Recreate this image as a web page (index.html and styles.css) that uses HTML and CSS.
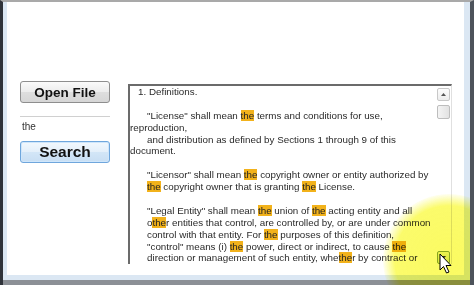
FILE: index.html
```html
<!DOCTYPE html>
<html>
<head>
<meta charset="utf-8">
<link rel="stylesheet" href="styles.css">
</head>
<body>
<div class="frame">
  <div class="chrome">
    <div class="client">
      <div class="side">
        <button class="btn open">Open File</button>
        <div class="sep"></div>
        <div class="query">the</div>
        <button class="btn search">Search</button>
      </div>
      <div class="doc">
        <div class="text">
          <div class="l i1">1. Definitions.</div>
          <div class="l"></div>
          <div class="l i2">"License" shall mean <mark>the</mark> terms and conditions for use,</div>
          <div class="l">reproduction,</div>
          <div class="l i2">and distribution as defined by Sections 1 through 9 of this</div>
          <div class="l">document.</div>
          <div class="l"></div>
          <div class="l i2">"Licensor" shall mean <mark>the</mark> copyright owner or entity authorized by</div>
          <div class="l i2"><mark>the</mark> copyright owner that is granting <mark>the</mark> License.</div>
          <div class="l"></div>
          <div class="l i2">"Legal Entity" shall mean <mark>the</mark> union of <mark>the</mark> acting entity and all</div>
          <div class="l i2">o<mark>the</mark>r entities that control, are controlled by, or are under common</div>
          <div class="l i2">control with that entity. For <mark>the</mark> purposes of this definition,</div>
          <div class="l i2">"control" means (i) <mark>the</mark> power, direct or indirect, to cause <mark>the</mark></div>
          <div class="l i2">direction or management of such entity, whe<mark>the</mark>r by contract or</div>
        </div>
        <div class="scroll">
          <div class="arrow up"><svg width="5" height="3" viewBox="0 0 5 3"><path d="M0 3 L2.5 0 L5 3Z" fill="#555"/></svg></div>
          <div class="thumb"></div>
          <div class="track"></div>
          <div class="arrow down"><svg width="5" height="3" viewBox="0 0 5 3"><path d="M0 0 L2.5 3 L5 0Z" fill="#333"/></svg></div>
        </div>
      </div>
    </div>
  </div>
  <div class="bottombar"></div>
  <div class="glow"></div>
  <svg class="cursor" width="14" height="22" viewBox="0 0 14 22"><path d="M1 1 L1 17 L4.5 13.5 L7.5 20 L10 19 L7 12.5 L12 12.5 Z" fill="#fff" stroke="#000" stroke-width="1"/></svg>
</div>
</body>
</html>
```
FILE: styles.css
```css
* { box-sizing: border-box; }
html, body { margin: 0; padding: 0; }
body { width: 474px; height: 285px; overflow: hidden; background: #fff; }
.frame {
  position: relative;
  width: 474px; height: 285px;
  border-top: 2px solid #a9a9a9;
  border-left: 3px solid #2f333a;
  border-right: 4px solid #4d535b;
  display: flex; flex-direction: column;
  overflow: hidden;
}
.chrome {
  height: 278px;
  border-left: 4px solid #dbe7f3;
  border-right: 6px solid #dbe7f3;
  border-bottom: 5px solid #dbe7f3;
  background: #fff;
}
.bottombar { flex: 1; background: #8c9096; }
.client {
  display: flex;
  padding: 79px 0 0 13px;
}
.side { width: 90px; display: flex; flex-direction: column; }
.btn {
  height: 22px; width: 90px;
  font-family: "Liberation Sans", Arial, sans-serif;
  font-weight: bold;
  color: #111;
  border-radius: 3px;
  background: linear-gradient(#fafafa, #ececec 50%, #dedede 51%, #d6d6d6);
  padding: 0;
}
.open { border: 1px solid #8e8e8e; font-size: 13.5px; }
.sep { height: 1px; background: #d0d0d0; margin: 13px 0 0 0; }
.query {
  font-family: "Liberation Sans", Arial, sans-serif;
  font-size: 10px; color: #333;
  margin: 4px 0 0 2px; height: 20px;
}
.search {
  border: 1px solid #6fa6dc;
  font-size: 15.5px;
  background: linear-gradient(#f2f8fd, #e3effa 50%, #d3e6f7 51%, #c8def3);
  box-shadow: inset 0 0 0 1px #cfe6fb;
}
.doc {
  margin: 3px 0 0 18px;
  width: 324px; height: 180px;
  border-top: 2px solid #6b6b6b;
  border-left: 2px solid #6b6b6b;
  border-right: 1px solid #e0e0e0;
  display: flex;
  overflow: hidden;
}
.text {
  flex: 1;
  padding: 0;
  font-family: "Liberation Sans", Arial, sans-serif;
  font-size: 9.8px;
  color: #2a2a2a;
  white-space: nowrap;
  overflow: hidden;
}
.l { height: 11.9px; line-height: 11.9px; }
.i1 { padding-left: 8px; }
.i2 { padding-left: 17px; }
mark { background: #f2b21b; color: #222; padding: 0; }
.scroll {
  width: 16px;
  display: flex; flex-direction: column; align-items: center;
  padding: 2px 0 0 0;
}
.arrow {
  width: 13px; height: 13px;
  border: 1px solid #c8c8c8;
  border-radius: 2px;
  background: linear-gradient(#fdfdfd, #ececec);
  display: flex; align-items: center; justify-content: center;
}
.thumb {
  width: 13px; height: 14px; margin-top: 4px;
  border: 1px solid #bdbdbd; border-radius: 2px;
  background: linear-gradient(90deg, #f4f4f4, #e2e2e2);
}
.track { flex: 1; }
.down { margin-bottom: 0; border-color: #8aa84a; background: linear-gradient(#f1f7c8, #d9e79a); }
.glow {
  position: absolute;
  left: 380px; top: 192px;
  width: 132px; height: 132px;
  border-radius: 50%;
  background: radial-gradient(circle, rgba(250,250,70,0.85) 0%, rgba(250,250,70,0.8) 58%, rgba(250,250,70,0) 72%);
  mix-blend-mode: multiply;
  pointer-events: none;
}
.cursor { position: absolute; left: 436px; top: 251px; }
```
